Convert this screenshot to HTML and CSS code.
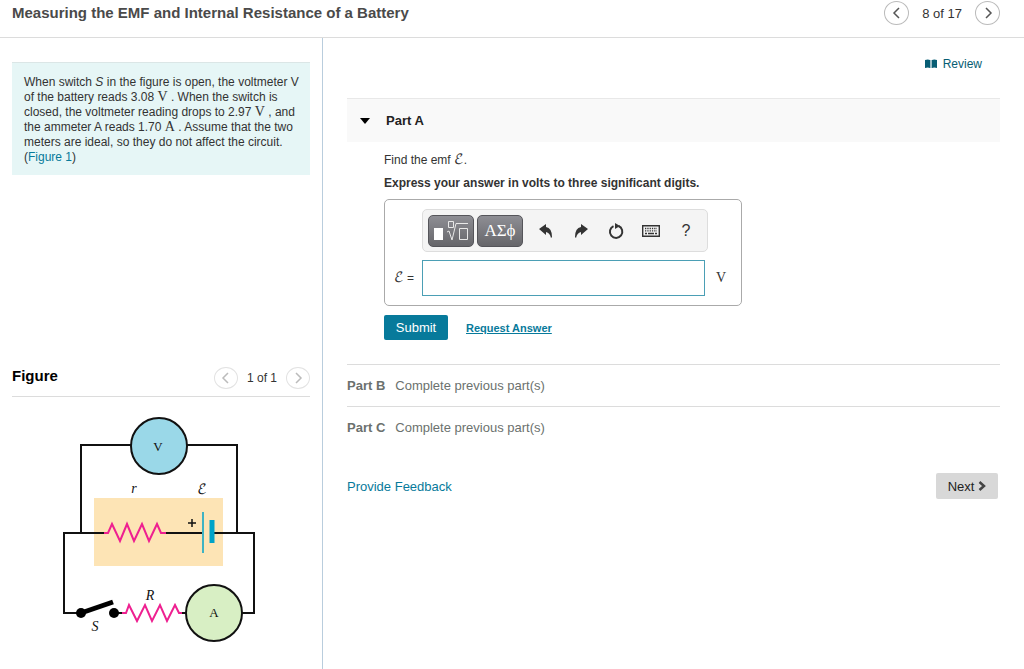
FILE: index.html
```html
<!DOCTYPE html>
<html lang="en">
<head>
<meta charset="UTF-8" />
<meta name="viewport" content="width=device-width, initial-scale=1" />
<title>Measuring the EMF and Internal Resistance of a Battery</title>
<link rel="stylesheet" href="styles.css">
</head>
<body>
  <!-- Top bar -->
  <header class="topbar">
    <h1>Measuring the EMF and Internal Resistance of a Battery</h1>
    <nav class="pager" aria-label="Items">
      <button class="round" aria-label="Previous item"><svg viewBox="0 0 12 12"><path d="M8 1L3 6l5 5" /></svg></button>
      <span>8 of 17</span>
      <button class="round" aria-label="Next item"><svg viewBox="0 0 12 12"><path d="M4 1l5 5-5 5" /></svg></button>
    </nav>
  </header>

  <div class="content">
    <!-- Left column: problem text and figure -->
    <aside class="side">
      <section class="problem">
        <p>When switch <i>S</i> in the figure is open, the voltmeter V of the battery reads 3.08 <span class="unit">V</span> . When the switch is closed, the voltmeter reading drops to 2.97 <span class="unit">V</span> , and the ammeter A reads 1.70 <span class="unit">A</span> . Assume that the two meters are ideal, so they do not affect the circuit. (<a href="#figure">Figure 1</a>)</p>
      </section>

      <section class="figure" id="figure">
        <div class="figure-head">
          <h2>Figure</h2>
          <div class="pager small">
            <button class="round" aria-label="Previous figure"><svg viewBox="0 0 12 12"><path d="M8 1L3 6l5 5" /></svg></button>
            <span>1 of 1</span>
            <button class="round" aria-label="Next figure"><svg viewBox="0 0 12 12"><path d="M4 1l5 5-5 5" /></svg></button>
          </div>
        </div>
        <svg class="circuit" viewBox="0 0 200 230" role="img" aria-label="Circuit diagram">
          <rect x="34" y="83" width="129" height="68" fill="#fde4b5" />
          <!-- wires -->
          <g class="wire">
            <path d="M21 118V30H177V118" />
            <path d="M21 198H4V118H44M105 118H143M152 118H194V198H154" />
            <path d="M54 198H62M121 198H130" />
          </g>
          <!-- resistors -->
          <path class="resistor" d="M44 118h4l4-9 8 17 7-17 7 17 8-17 7 17 8-17 4 9h5" />
          <path class="resistor" d="M62 198h4l3-8 8 16 8-16 7 16 8-16 7 16 8-16 4 8h3" />
          <!-- battery -->
          <path d="M143 97v41" stroke="#3fb3c3" stroke-width="2" />
          <path d="M152 105v23" stroke="#00a3c8" stroke-width="5" />
          <path d="M128 108h8M132 104v8" stroke="#111" stroke-width="1.5" />
          <!-- switch -->
          <circle cx="21" cy="198" r="5" />
          <circle cx="54" cy="198" r="5" />
          <path d="M21 198L53 187" stroke="#000" stroke-width="5" />
          <!-- meters -->
          <circle class="meter" cx="99" cy="31" r="28" fill="#9ad8e8" />
          <circle class="meter" cx="154" cy="198" r="28" fill="#d8efc4" />
          <text x="98" y="36">V</text>
          <text x="154" y="202">A</text>
          <text x="74" y="78" class="var">r</text>
          <text x="142" y="79" class="script">ℰ</text>
          <text x="90" y="185" class="var">R</text>
          <text x="35" y="216" class="var">S</text>
        </svg>
      </section>
    </aside>

    <!-- Right column: the parts -->
    <main class="parts">
      <a class="review" href="#review">
        <svg viewBox="0 0 12 10"><path d="M0 1q3-1 5 0v8q-2-1-5 0zM7 1q2-1 5 0v8q-3-1-5 0z" /><path d="M5 1h2v8H5z" opacity=".4" /></svg>
        Review
      </a>

      <section class="part">
        <h2 class="part-title">
          <svg viewBox="0 0 10 6"><path d="M0 0h10L5 6z" /></svg>
          Part A
        </h2>
        <div class="part-body">
          <p>Find the emf <span class="emf">ℰ</span>.</p>
          <p><b>Express your answer in volts to three significant digits.</b></p>
          <div class="answer">
            <div class="toolbar">
              <button class="dark" aria-label="Templates">
                <svg width="36" height="22" viewBox="0 0 36 22">
                  <path d="M1 8h9v12H1z" fill="#fff" />
                  <path d="M15.500 1.500h5v6h-5zM26.500 8.500h8v11h-8zM14 12l2-1 3 9 4-16.500h12" fill="none" stroke="#e8e8e8" />
                </svg>
              </button>
              <button class="dark greek">ΑΣϕ</button>
              <button class="tool" aria-label="Undo"><svg viewBox="0 0 16 16"><path d="M1 6l7-5v3q6 1 6 10l-1 1q-1-5-5-6v3z" /></svg></button>
              <button class="tool" aria-label="Redo"><svg viewBox="0 0 16 16"><path d="M15 6L8 1v3Q2 5 2 14l1 1q1-5 5-6v3z" /></svg></button>
              <button class="tool" aria-label="Reset"><svg viewBox="0 0 16 16"><path d="M10.500 3a6.200 6.200 0 1 1-5 .1" fill="none" stroke="#333" stroke-width="2" /><path d="M7 0l5 3-5 3z" /></svg></button>
              <button class="tool" aria-label="Keyboard shortcuts">
                <svg class="keys" viewBox="0 0 18 12"><path d="M.7.7h16.600v10.600H.7z" fill="none" stroke="#333" stroke-width="1.400" /><path d="M3 3.500h12M3 5.800h12" stroke="#333" stroke-width="1.300" stroke-dasharray="1.300 1" /><path d="M3 8.500h2M6 8.500h6M13 8.500h2" stroke="#333" stroke-width="1.500" /></svg>
              </button>
              <button class="tool help" aria-label="Help">?</button>
            </div>
            <label for="emf-value"><span class="emf">ℰ</span> =</label>
            <input type="text" id="emf-value" autocomplete="off" />
            <span class="unit">V</span>
          </div>
          <div class="actions">
            <button class="submit">Submit</button>
            <a href="#answer">Request Answer</a>
          </div>
        </div>
      </section>

      <section class="locked"><b>Part B</b> <span>Complete previous part(s)</span></section>
      <section class="locked"><b>Part C</b> <span>Complete previous part(s)</span></section>

      <footer class="foot">
        <a href="#feedback">Provide Feedback</a>
        <button class="next">Next <svg viewBox="0 0 8 10"><path d="M1.500 1L6 5l-4.500 4" /></svg></button>
      </footer>
    </main>
  </div>
</body>
</html>
```
FILE: styles.css
```css
/* ========== Global ========== */
* {
  box-sizing: border-box;
}
html, body {
  margin: 0;
  height: 100%;
}
body {
  display: flex;
  flex-direction: column;
  font-family: "Liberation Sans", Arial, sans-serif;
  font-size: 13px;
  color: #333;
  background: #fff;
}
h1, h2, p {
  margin: 0;
}
a {
  color: #077a9b;
  text-decoration: none;
}
button {
  font-family: inherit;
  padding: 0;
  border: none;
  background: none;
  cursor: pointer;
}
.unit {
  font-family: "Liberation Serif", serif;
  font-size: 14px;
  line-height: 1;
}
.emf {
  font-family: "DejaVu Math TeX Gyre", "DejaVu Sans", sans-serif;
  font-size: 14px;
  line-height: 1;
}
/* ========== Top bar ========== */
.topbar {
  display: flex;
  justify-content: space-between;
  height: 38px;
  padding: 0 24px 0 12px;
  border-bottom: 1px solid #dcdcdc;
}
.topbar h1 {
  font-size: 15px;
  line-height: 26px;
  color: #4a4a4a;
}
.pager {
  display: flex;
  align-items: center;
  gap: 13px;
  height: 26px;
}
.round {
  display: flex;
  justify-content: center;
  align-items: center;
  width: 25px;
  height: 24px;
  border: 1px solid #bbb;
  border-radius: 50%;
}
.round svg {
  width: 12px;
  height: 12px;
  fill: none;
  stroke: #555;
  stroke-width: 1.5;
}
.small {
  gap: 9px;
  font-size: 12px;
}
.small .round {
  width: 24px;
  height: 22px;
  border-color: #e2e2e2;
}
.small svg {
  stroke: #bbb;
}
/* ========== Left column ========== */
.content {
  flex: 1;
  display: flex;
}
.side {
  flex: 0 0 323px;
  display: grid;
  grid-template-rows: 51fr 49fr;
  padding: 0 12px;
  border-right: 1px solid #b9cddd;
}
.problem {
  padding-top: 24px;
}
.problem p {
  padding: 12px 8px 10px 12px;
  border-top: 1px solid #dbe6e6;
  background: #e6f6f6;
  font-size: 12px;
  line-height: 15px;
}
.figure-head {
  display: flex;
  justify-content: space-between;
  align-items: center;
  height: 37px;
  border-bottom: 1px solid #dcdcdc;
}
.figure-head h2 {
  padding-bottom: 4px;
  font-size: 15px;
  color: #000;
}
.circuit {
  display: block;
  width: 200px;
  margin: 18px auto 0 48px;
}
.wire {
  fill: none;
  stroke: #111;
  stroke-width: 2;
}
.resistor {
  fill: none;
  stroke: #ee2090;
  stroke-width: 2;
}
.meter {
  stroke: #111;
  stroke-width: 2;
}
.circuit text {
  font-family: "Liberation Serif", serif;
  font-size: 13px;
  text-anchor: middle;
  fill: #111;
}
.circuit .var {
  font-size: 14px;
  font-style: italic;
}
.circuit .script {
  font-family: "DejaVu Math TeX Gyre", "DejaVu Sans", sans-serif;
  font-size: 14px;
}
/* ========== Right column ========== */
.parts {
  flex: 1;
  display: flex;
  flex-direction: column;
  padding: 18px 24px 0;
}
.review {
  display: flex;
  align-items: center;
  align-self: flex-end;
  gap: 6px;
  height: 16px;
  margin-right: 18px;
  font-size: 12px;
  color: #075d74;
}
.review svg {
  width: 12px;
  height: 10px;
  fill: #075d74;
}
.part-title {
  display: flex;
  align-items: center;
  gap: 16px;
  height: 44px;
  margin-top: 26px;
  padding-left: 13px;
  border-top: 1px solid #e8e8e8;
  background: #f9f9f9;
  font-size: 13px;
  color: #222;
}
.part-title svg {
  width: 10px;
  height: 6px;
}
.part-body {
  padding: 6px 0 24px 37px;
}
.part-body p {
  font-size: 12px;
  line-height: 24px;
}
.part-body p + p {
  line-height: 22px;
}
.answer {
  display: grid;
  grid-template-columns: 37px 283px auto;
  row-gap: 8px;
  align-items: center;
  width: fit-content;
  margin-top: 5px;
  padding: 9px 15px 9px 0;
  border: 1px solid #aaa;
  border-radius: 5px;
}
.toolbar {
  grid-column: 2 / 4;
  display: flex;
  align-items: center;
  gap: 3px;
  width: 286px;
  height: 43px;
  padding-left: 5px;
  border: 1px solid #ddd;
  border-radius: 5px;
  background: #f4f4f4;
}
.dark {
  display: flex;
  justify-content: center;
  align-items: center;
  width: 46px;
  height: 32px;
  border: 1px solid #55555a;
  border-radius: 5px;
  background: linear-gradient(#8e8e94, #66666a);
  color: #fff;
}
.greek {
  font-family: "Liberation Serif", serif;
  font-size: 17px;
}
.tool {
  display: flex;
  justify-content: center;
  align-items: center;
  width: 32px;
  height: 32px;
  color: #333;
}
.greek + .tool {
  margin-left: 4px;
}
.tool svg {
  width: 16px;
  height: 16px;
  fill: #333;
}
.tool .keys {
  width: 18px;
  height: 12px;
}
.help {
  font-size: 16px;
}
.answer label {
  padding-right: 8px;
  font-size: 12px;
  text-align: right;
}
.answer input {
  width: 283px;
  height: 36px;
  padding: 0 8px;
  border: 1px solid #4b9fb5;
  outline: none;
  font-size: 14px;
}
.answer > .unit {
  padding-left: 11px;
}
.actions {
  display: flex;
  align-items: center;
  gap: 18px;
  margin-top: 9px;
}
.submit {
  width: 64px;
  height: 25px;
  border-radius: 2px;
  background: #077a9b;
  color: #fff;
  font-size: 13px;
}
.actions a {
  font-size: 11px;
  font-weight: bold;
  text-decoration: underline;
}
.locked {
  display: flex;
  gap: 10px;
  border-top: 1px solid #dcdcdc;
  font-size: 13px;
  line-height: 41px;
  color: #6b716e;
}
.foot {
  display: flex;
  justify-content: space-between;
  align-items: center;
  margin-top: 25px;
  padding-right: 2px;
}
.next {
  display: flex;
  justify-content: center;
  align-items: center;
  gap: 4px;
  width: 62px;
  height: 26px;
  border-radius: 2px;
  background: #d8d8d8;
  color: #222;
  font-size: 13px;
}
.next svg {
  width: 8px;
  height: 10px;
  fill: none;
  stroke: #444;
  stroke-width: 2.5;
}
```
